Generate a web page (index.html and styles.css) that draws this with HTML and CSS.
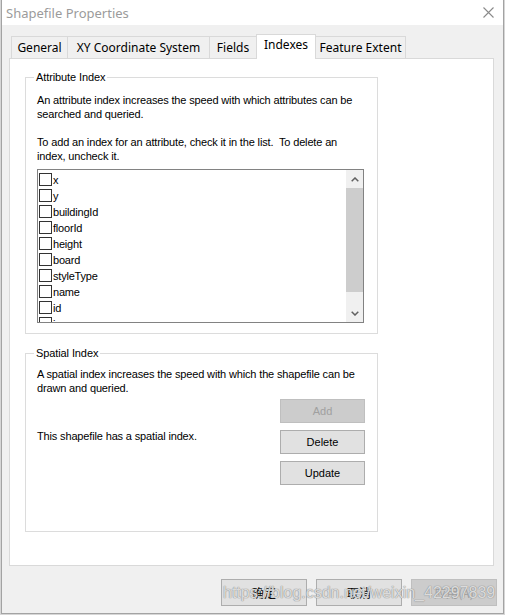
FILE: index.html
```html
<!DOCTYPE html>
<html>
<head>
<meta charset="utf-8">
<title>Shapefile Properties</title>
<link rel="stylesheet" href="styles.css">
</head>
<body>
<div class="window">
  <div class="titlebar">
    <span class="title">Shapefile Properties</span>
    <svg class="close" width="11" height="11" viewBox="0 0 11 11"><path d="M0.5 0.5 L10.5 10.5 M10.5 0.5 L0.5 10.5" stroke="#8a8a8a" stroke-width="1.1" fill="none"/></svg>
  </div>
  <div class="body">
    <div class="tabs">
      <div class="tab t-general">General</div>
      <div class="tab t-xy">XY Coordinate System</div>
      <div class="tab t-fields">Fields</div>
      <div class="tab t-indexes active">Indexes</div>
      <div class="tab t-extent">Feature Extent</div>
    </div>
    <div class="panel">
      <fieldset class="group attr">
        <legend>Attribute Index</legend>
        <p class="para first">An attribute index increases the speed with which attributes can be<br>searched and queried.</p>
        <p class="para second">To add an index for an attribute, check it in the list.&nbsp; To delete an<br>index, uncheck it.</p>
        <div class="listbox">
          <ul class="items">
            <li class="item"><span class="check"></span><span class="label">x</span></li>
            <li class="item"><span class="check"></span><span class="label">y</span></li>
            <li class="item"><span class="check"></span><span class="label">buildingId</span></li>
            <li class="item"><span class="check"></span><span class="label">floorId</span></li>
            <li class="item"><span class="check"></span><span class="label">height</span></li>
            <li class="item"><span class="check"></span><span class="label">board</span></li>
            <li class="item"><span class="check"></span><span class="label">styleType</span></li>
            <li class="item"><span class="check"></span><span class="label">name</span></li>
            <li class="item"><span class="check"></span><span class="label">id</span></li>
            <li class="item"><span class="check"></span><span class="label">i</span></li>
          </ul>
          <div class="scrollbar">
            <div class="arrow up"><svg width="8" height="5" viewBox="0 0 8 5"><path d="M0.7 4.3 L4 1 L7.3 4.3" stroke="#606060" stroke-width="1.5" fill="none"/></svg></div>
            <div class="thumb"></div>
            <div class="track"></div>
            <div class="arrow"><svg width="8" height="5" viewBox="0 0 8 5"><path d="M0.7 0.7 L4 4 L7.3 0.7" stroke="#606060" stroke-width="1.5" fill="none"/></svg></div>
          </div>
        </div>
      </fieldset>
      <fieldset class="group spatial">
        <legend>Spatial Index</legend>
        <p class="para sp">A spatial index increases the speed with which the shapefile can be<br>drawn and queried.</p>
        <div class="spatial-grid">
          <button class="btn small disabled add">Add</button>
          <span class="status">This shapefile has a spatial index.</span>
          <button class="btn small delete">Delete</button>
          <button class="btn small update">Update</button>
        </div>
      </fieldset>
    </div>
    <div class="buttons">
      <button class="btn big">确定</button>
      <button class="btn big">取消</button>
      <button class="btn big disabled">应用(A)</button>
    </div>
  </div>
  <div class="watermark">https://blog.csdn.net/weixin_42297839</div>
</div>
</body>
</html>
```

FILE: styles.css
```css
html, body {
  margin: 0;
  padding: 0;
}
body {
  background: #d6d6d6;
  font-family: "Liberation Sans", Arial, sans-serif;
  width: 505px;
  height: 615px;
  overflow: hidden;
}
.window {
  position: relative;
  margin-left: 1px;
  width: 501px;
  height: 613px;
  border: 1px solid #a3a3a3;
  border-top: none;
  background: #f0f0f0;
  display: flex;
  flex-direction: column;
}
.titlebar {
  height: 25px;
  background: #fff;
  display: flex;
  align-items: center;
  justify-content: space-between;
  padding: 0 9px 0 4px;
}
.title {
  font-family: "Noto Sans", sans-serif;
  font-size: 13px;
  color: #9b9b9b;
}
.close {
  display: block;
}
.body {
  flex: 1;
  padding: 9px 9px 0 7px;
  display: flex;
  flex-direction: column;
}
.tabs {
  display: flex;
  align-items: flex-end;
  height: 24px;
  padding-left: 2px;
  position: relative;
  z-index: 2;
}
.tab {
  box-sizing: border-box;
  height: 22px;
  border: 1px solid #d9d9d9;
  border-bottom: none;
  margin-right: -1px;
  padding: 0;
  background: #f0f0f0;
  font-family: "Noto Sans", sans-serif;
  font-size: 12px;
  line-height: 21px;
  color: #000;
  text-align: center;
  white-space: nowrap;
}
.t-general { width: 57px; }
.t-xy { width: 143px; }
.t-fields { width: 48px; }
.t-indexes { width: 60px; }
.t-extent { width: 91px; }
.tab.active {
  height: 25px;
  margin-bottom: -1px;
  background: #fff;
  line-height: 20px;
  position: relative;
  z-index: 3;
}
.panel {
  box-sizing: border-box;
  height: 508px;
  background: #fff;
  border: 1px solid #d9d9d9;
  padding: 11px 0 0 15px;
}
.group {
  box-sizing: border-box;
  width: 353px;
  margin: 0;
  padding: 0 12px 0 11px;
  border: 1px solid #dcdcdc;
}
.group legend {
  font-size: 11px;
  line-height: 14px;
  padding: 0 2px;
  margin-left: -3px;
  color: #000;
  letter-spacing: -0.1px;
}
.para {
  margin: 0;
  font-size: 11px;
  letter-spacing: -0.15px;
  line-height: 13.5px;
  color: #000;
  white-space: nowrap;
}
.para.first {
  margin-top: 10px;
}
.para.second {
  margin-top: 15px;
}
.attr {
  padding-bottom: 10px;
}
.listbox {
  box-sizing: border-box;
  width: 327px;
  height: 154px;
  margin-top: 6px;
  border: 1px solid #828282;
  display: flex;
  background: #fff;
}
.items {
  flex: 1;
  list-style: none;
  margin: 0;
  padding: 1px 0 0 0;
  overflow: hidden;
}
.item {
  height: 16px;
  display: flex;
  align-items: center;
  padding-left: 1px;
}
.check {
  box-sizing: border-box;
  width: 13px;
  height: 13px;
  border: 1px solid #333;
  background: #fff;
  flex: none;
}
.label {
  margin-left: 1px;
  margin-top: 1px;
  font-size: 11px;
  letter-spacing: -0.2px;
  color: #000;
}
.scrollbar {
  width: 17px;
  background: #f0f0f0;
  display: flex;
  flex-direction: column;
}
.arrow {
  height: 17px;
  display: flex;
  align-items: center;
  justify-content: center;
}
.arrow.up {
  height: 18px;
}
.thumb {
  height: 104px;
  background: #cdcdcd;
}
.track {
  flex: 1;
}
.spatial {
  margin-top: 12px;
  padding-bottom: 46px;
}
.para.sp {
  margin-top: 8px;
}
.spatial-grid {
  display: grid;
  grid-template-columns: 1fr 85px;
  row-gap: 7px;
  margin-top: 4px;
}
.add {
  grid-column: 2;
  grid-row: 1;
}
.status {
  grid-column: 1;
  grid-row: 2;
  align-self: center;
  font-size: 11px;
  letter-spacing: -0.15px;
  color: #000;
  margin-top: -12px;
}
.delete {
  grid-column: 2;
  grid-row: 2;
}
.update {
  grid-column: 2;
  grid-row: 3;
  margin-left: 1px;
}
.btn {
  box-sizing: border-box;
  margin: 0;
  padding: 0;
  background: #e1e1e1;
  border: 1px solid #adadad;
  color: #000;
  font-family: "Liberation Sans", Arial, sans-serif;
  font-size: 11px;
}
.btn.small {
  width: 85px;
  height: 24px;
}
.btn.disabled {
  background: #cccccc;
  border-color: #bfbfbf;
  color: #a0a0a0;
}
.buttons {
  display: flex;
  justify-content: flex-end;
  gap: 9px;
  margin-top: 13px;
  margin-right: -3px;
}
.btn.big {
  width: 86px;
  height: 27px;
  font-family: "Noto Sans CJK SC", "Noto Sans", sans-serif;
  font-size: 12px;
}
.watermark {
  position: absolute;
  left: 221px;
  top: 583px;
  font-family: "Liberation Sans", Arial, sans-serif;
  font-size: 16px;
  line-height: 20px;
  color: rgba(255, 255, 255, 0.7);
  text-shadow: 0 0 1px #8a8a8a, 0 0 1px #8a8a8a;
  white-space: nowrap;
  pointer-events: none;
}
```
